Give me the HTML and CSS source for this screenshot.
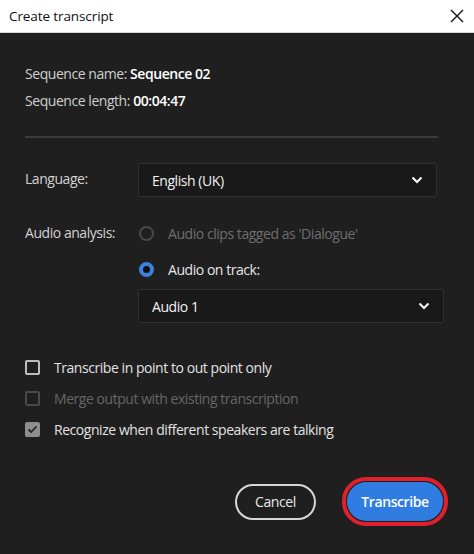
FILE: index.html
```html
<!DOCTYPE html>
<html>
<head>
<meta charset="utf-8">
<link rel="stylesheet" href="styles.css">
</head>
<body>
<div class="dialog">
  <div class="titlebar">
    <span class="title">Create transcript</span>
    <svg class="close" width="14" height="14" viewBox="0 0 14 14"><path d="M1 1L13 13M13 1L1 13" stroke="#111" stroke-width="1.4" fill="none"/></svg>
  </div>
  <div class="body">
    <div class="info">
      <div class="info-line">Sequence name: <b>Sequence 02</b></div>
      <div class="info-line">Sequence length: <b>00:04:47</b></div>
    </div>
    <div class="divider"></div>
    <div class="row row-lang">
      <div class="label">Language:</div>
      <div class="select select-lang">
        <span>English (UK)</span>
        <svg class="chev" width="12" height="8" viewBox="0 0 12 8"><path d="M1.5 1.5L6 6L10.5 1.5" stroke="#fff" stroke-width="2" fill="none"/></svg>
      </div>
    </div>
    <div class="row row-audio">
      <div class="label">Audio analysis:</div>
      <div class="options">
        <div class="radio-line disabled"><span class="radio"></span>Audio clips tagged as 'Dialogue'</div>
        <div class="radio-line"><span class="radio on"></span>Audio on track:</div>
        <div class="select select-track">
          <span>Audio 1</span>
          <svg class="chev" width="12" height="8" viewBox="0 0 12 8"><path d="M1.5 1.5L6 6L10.5 1.5" stroke="#fff" stroke-width="2" fill="none"/></svg>
        </div>
      </div>
    </div>
    <div class="checks">
      <div class="check-line"><span class="box"></span>Transcribe in point to out point only</div>
      <div class="check-line disabled"><span class="box"></span>Merge output with existing transcription</div>
      <div class="check-line"><span class="box checked"><svg width="11" height="9" viewBox="0 0 11 9"><path d="M1.5 4.5L4.2 7L9.5 1.5" stroke="#222" stroke-width="1.8" fill="none"/></svg></span>Recognize when different speakers are talking</div>
    </div>
    <div class="footer">
      <button class="btn cancel">Cancel</button>
      <div class="highlight"><button class="btn primary">Transcribe</button></div>
    </div>
  </div>
</div>
</body>
</html>
```
FILE: styles.css
```css
html, body {
  margin: 0;
  padding: 0;
  background: #1e1e1e;
}
body {
  width: 474px;
  height: 554px;
  overflow: hidden;
  font-family: "Open Sans", "Liberation Sans", sans-serif;
}
.dialog {
  width: 474px;
  height: 554px;
  display: flex;
  flex-direction: column;
  background: #1f1f1f;
}
.titlebar {
  height: 33px;
  flex: none;
  background: #fff;
  display: flex;
  align-items: center;
  justify-content: space-between;
  padding: 0 10px 0 9px;
  box-sizing: border-box;
  border-bottom: 1px solid #d8d8d8;
}
.title {
  font-size: 13.5px;
  color: #111;
  letter-spacing: -0.1px;
}
.close { display: block; }
.body {
  padding: 0 30px 0 25px;
  display: flex;
  flex-direction: column;
  color: #cfcfcf;
  font-size: 14px;
  letter-spacing: -0.45px;
}
.info {
  padding-top: 27px;
}
.info-line {
  height: 27px;
  line-height: 27px;
}
.info-line b {
  color: #fff;
  font-weight: 600;
}
.divider {
  margin: 22px 6px 0 0;
  height: 2px;
  background: #3c3c3c;
}
.row {
  display: grid;
  grid-template-columns: 113px 1fr;
}
.row-lang {
  margin-top: 25px;
  align-items: center;
}
.label {
  color: #d2d2d2;
}
.row-lang .label { margin-top: -4px; }
.select {
  height: 34px;
  box-sizing: border-box;
  border: 1px solid #2f2f2f;
  border-radius: 2px;
  background: #191919;
  display: flex;
  align-items: center;
  justify-content: space-between;
  padding: 0 13px 0 13px;
  color: #f2f2f2;
}
.select-lang { margin-right: 7px; }
.select-track { margin-top: 8px; }
.chev { display: block; }
.row-audio {
  margin-top: 24px;
}
.row-audio .label {
  line-height: 24px;
}
.options {
  display: flex;
  flex-direction: column;
}
.radio-line {
  display: flex;
  align-items: center;
  height: 24px;
  color: #e6e6e6;
}
.radio-line + .radio-line { margin-top: 12px; }
.radio-line.disabled { color: #6e6e6e; }
.radio {
  width: 11px;
  height: 11px;
  border: 2px solid #4a4a4a;
  border-radius: 50%;
  margin: 0 14px 0 1px;
  box-sizing: content-box;
  flex: none;
}
.radio.on {
  width: 7px;
  height: 7px;
  border: 4px solid #3b82e0;
  background: #111;
}
.checks {
  margin-top: 32px;
  display: flex;
  flex-direction: column;
  gap: 7px;
}
.check-line {
  display: flex;
  align-items: center;
  height: 24px;
  color: #e2e2e2;
}
.check-line.disabled { color: #666; }
.box {
  width: 11px;
  height: 11px;
  border: 2px solid #bdbdbd;
  border-radius: 2px;
  margin-right: 14px;
  flex: none;
  display: flex;
  align-items: center;
  justify-content: center;
  box-sizing: content-box;
}
.check-line.disabled .box { border-color: #4a4a4a; }
.box.checked {
  border-color: #8e8e8e;
  background: #8e8e8e;
}
.footer {
  margin-top: 36px;
  display: flex;
  justify-content: flex-end;
  align-items: center;
  gap: 26px;
  margin-right: -4px;
}
.btn {
  font-family: inherit;
  font-size: 14px;
  letter-spacing: -0.4px;
  border-radius: 18px;
  height: 36px;
  cursor: pointer;
}
.cancel {
  width: 81px;
  background: transparent;
  border: 2px solid #d8d8d8;
  color: #e8e8e8;
}
.highlight {
  border: 4px solid #e0202a;
  border-radius: 24px;
  padding: 1px;
  background: #1f1f1f;
}
.primary {
  display: block;
  width: 96px;
  height: 39px;
  border: none;
  background: #2f7de1;
  color: #fff;
  font-weight: 600;
  border-radius: 20px;
}
```
